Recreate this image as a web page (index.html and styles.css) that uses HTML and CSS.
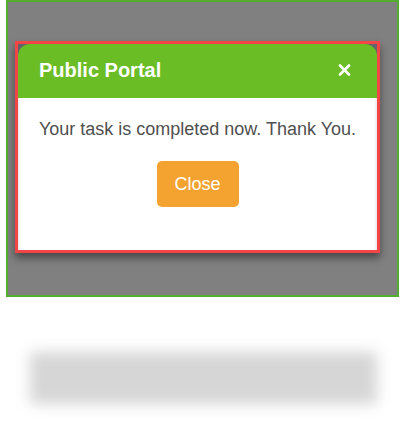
FILE: index.html
```html
<!DOCTYPE html>
<html lang="en">
<head>
    <meta charset="UTF-8">
    <meta name="viewport" content="width=device-width, initial-scale=1.0">
    <title>Public Portal</title>
    <link rel="stylesheet" href="styles.css">
</head>
<body>

    <div class="overlay">
        <div class="highlight">
            <div class="modal">
                <div class="modal-header">
                    <h2>Public Portal</h2>
                    <button class="close-x" aria-label="Close">
                        <svg width="13" height="12" viewBox="0 0 13 12">
                            <path d="M2 1.5 L11 10.5 M11 1.5 L2 10.5" stroke="#fff" stroke-width="2.6" stroke-linecap="round"/>
                        </svg>
                    </button>
                </div>
                <div class="modal-body">
                    <p>Your task is completed now. Thank You.</p>
                    <button class="btn-close">Close</button>
                </div>
            </div>
        </div>
    </div>

    <div class="ghost-bar"></div>

</body>
</html>
```

FILE: styles.css
```css
body {
    margin: 0;
    padding-bottom: 30px;
    font-family: "Liberation Sans", Arial, sans-serif;
    background-color: #ffffff;
}
.overlay {
    box-sizing: border-box;
    margin: 0 6px;
    height: 297px;
    padding: 39px 17px 0 7px;
    border: 2px solid #52ad2e;
    background-color: #808080;
}
.highlight {
    box-sizing: border-box;
    width: 365px;
    border: 3px solid #f24545;
    background-color: #62626c;
    box-shadow: 0 5px 8px rgba(0, 0, 0, 0.45);
}
.modal {
    border-radius: 12px 12px 0 0;
    overflow: hidden;
}
.modal-header {
    height: 54px;
    box-sizing: border-box;
    padding: 0 26px 2px 21px;
    display: flex;
    align-items: center;
    justify-content: space-between;
    background-color: #6abd24;
}
.modal-header h2 {
    margin: 0;
    font-size: 20px;
    font-weight: bold;
    color: #ffffff;
}
.close-x {
    padding: 0;
    border: none;
    background: none;
    display: flex;
}
.modal-body {
    height: 152px;
    box-sizing: border-box;
    padding-top: 21px;
    text-align: center;
    background-color: #ffffff;
    box-shadow: inset 3px 0 3px -2px rgba(0, 0, 0, 0.12), inset -3px 0 3px -2px rgba(0, 0, 0, 0.12);
}
.modal-body p {
    margin: 0 0 21px;
    font-size: 18px;
    line-height: 21px;
    color: #4f4f4f;
}
.btn-close {
    width: 82px;
    height: 46px;
    border: none;
    border-radius: 5px;
    background-color: #f4a331;
    color: #ffffff;
    font-family: "Liberation Sans", Arial, sans-serif;
    font-size: 18px;
}
.ghost-bar {
    margin: 55px 28px 0 30px;
    height: 52px;
    background-color: #d6d6d6;
    filter: blur(7px);
}
```
